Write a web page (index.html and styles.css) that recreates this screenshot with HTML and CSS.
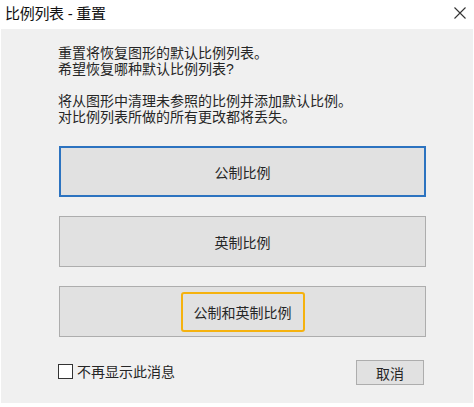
FILE: index.html
```html
<!DOCTYPE html>
<html lang="zh-CN">
<head>
<meta charset="utf-8">
<title>比例列表 - 重置</title>
<link rel="stylesheet" href="styles.css">
</head>
<body>
<div class="window">
  <div class="titlebar">
    <span class="title">比例列表 - 重置</span>
    <svg class="close" width="12" height="12" viewBox="0 0 12 12"><path d="M0.5 0.5 L11.5 11.5 M11.5 0.5 L0.5 11.5" stroke="#333" stroke-width="1.1" fill="none"/></svg>
  </div>
  <div class="panel">
    <div class="msg">
      <div class="line">重置将恢复图形的默认比例列表。</div>
      <div class="line">希望恢复哪种默认比例列表?</div>
    </div>
    <div class="msg">
      <div class="line">将从图形中清理未参照的比例并添加默认比例。</div>
      <div class="line">对比例列表所做的所有更改都将丢失。</div>
    </div>
    <div class="choices">
      <div class="choice default">公制比例</div>
      <div class="choice">英制比例</div>
      <div class="choice"><span class="focus">公制和英制比例</span></div>
    </div>
    <div class="footer">
      <label class="check"><span class="box"></span>不再显示此消息</label>
      <div class="cancel">取消</div>
    </div>
  </div>
</div>
</body>
</html>
```

FILE: styles.css
```css
html, body {
  margin: 0;
  padding: 0;
  background: #ffffff;
}
body {
  width: 474px;
  height: 407px;
  overflow: hidden;
  font-family: "Liberation Sans", "Noto Sans CJK SC", sans-serif;
  color: #1e1e1e;
}
.window {
  display: flex;
  flex-direction: column;
}
.titlebar {
  height: 29px;
  display: flex;
  align-items: center;
  justify-content: space-between;
  padding: 0 8px 4px 5px;
  box-sizing: border-box;
}
.title {
  font-size: 15px;
  color: #111;
  letter-spacing: -0.3px;
}
.close {
  display: block;
}
.panel {
  background: #f0f0f0;
  margin: 0 1px;
  height: 374px;
  box-sizing: border-box;
  padding: 16px 0 0 57px;
  display: flex;
  flex-direction: column;
}
.msg {
  margin: 0 0 16px 0;
  font-size: 14px;
  line-height: 16px;
  color: #262626;
}
.line {
  height: 16px;
  white-space: nowrap;
}
.choices {
  margin-top: 5px;
  display: flex;
  flex-direction: column;
  gap: 19px;
  width: 367px;
  margin-left: 1px;
}
.choice {
  height: 51px;
  box-sizing: border-box;
  background: #e1e1e1;
  border: 1px solid #adadad;
  display: flex;
  align-items: center;
  justify-content: center;
  font-size: 14px;
  color: #262626;
}
.choice.default {
  border: 2px solid #2c73c0;
}
.focus {
  display: flex;
  align-items: center;
  justify-content: center;
  width: 124px;
  height: 40px;
  box-sizing: border-box;
  border: 2px solid #f5b20f;
  border-radius: 3px;
}
.footer {
  margin-top: 23px;
  width: 367px;
  height: 25px;
  display: flex;
  align-items: center;
  justify-content: space-between;
}
.check {
  display: flex;
  align-items: center;
  gap: 4px;
  font-size: 14px;
  color: #262626;
  margin-top: -3px;
}
.box {
  width: 15px;
  height: 15px;
  box-sizing: border-box;
  border: 1px solid #333;
  background: #fff;
}
.cancel {
  width: 68px;
  height: 25px;
  box-sizing: border-box;
  background: #e1e1e1;
  border: 1px solid #adadad;
  display: flex;
  align-items: center;
  justify-content: center;
  font-size: 14px;
  color: #262626;
  margin-right: 1px;
}
```
